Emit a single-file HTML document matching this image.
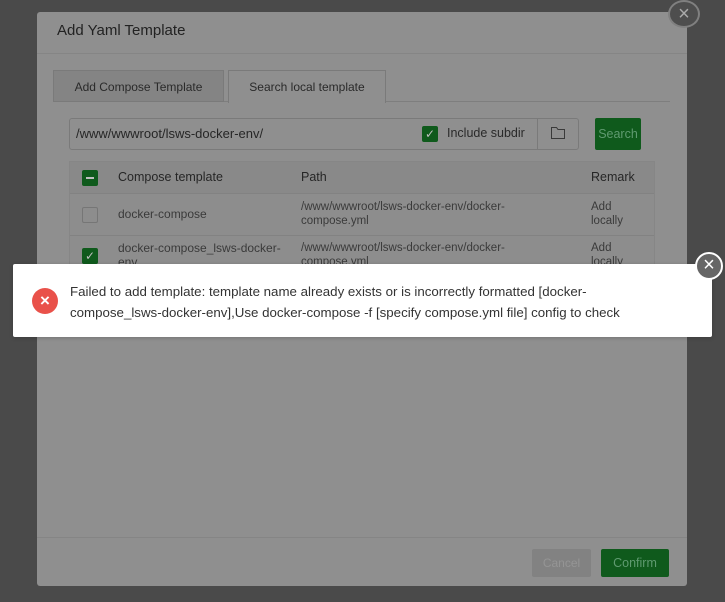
<!DOCTYPE html><html><head><style>
*{box-sizing:border-box;margin:0;padding:0}
body{width:725px;height:602px;background:#4a4a4a;font-family:"Liberation Sans",sans-serif;position:relative;overflow:hidden;color:#333}
.a{position:absolute}
.m{left:37px;top:12px;width:650px;height:574px;background:#8f8f8f;border-radius:3px}
.cb{width:16px;height:16px;border-radius:2px}
.g{background:#0f5a1c}
.chk{color:#bfbfbf;font-size:12px;line-height:16px;text-align:center}
</style></head><body>
<div class="a m"></div>
<div class="a" style="left:37px;top:53px;width:650px;height:1px;background:#858585"></div>
<div class="a" style="left:57px;top:22px;font-size:15px;color:#222">Add Yaml Template</div>
<div class="a" style="left:668px;top:0;width:32px;height:28px;border-radius:50%;background:#4e4e4e;border:2px solid #808080;color:#aaa;text-align:center;font-size:20px;line-height:24px">×</div>
<!-- tabs -->
<div class="a" style="left:53px;top:101px;width:617px;height:1px;background:#7e7e7e"></div>
<div class="a" style="left:53px;top:70px;width:171px;height:32px;background:#848484;border:1px solid #7a7a7a;font-size:12px;color:#2a2a2a;text-align:center;line-height:32px">Add Compose Template</div>
<div class="a" style="left:228px;top:70px;width:158px;height:33px;background:#8f8f8f;border:1px solid #7a7a7a;border-bottom:none;font-size:12px;color:#2a2a2a;text-align:center;line-height:32px">Search local template</div>
<!-- search row -->
<div class="a" style="left:69px;top:118px;width:510px;height:32px;border:1px solid #7a7a7a;border-radius:3px"></div>
<div class="a" style="left:537px;top:118px;width:1px;height:32px;background:#7a7a7a"></div>
<div class="a" style="left:76px;top:126px;font-size:13px;color:#262626">/www/wwwroot/lsws-docker-env/</div>
<div class="a cb g chk" style="left:422px;top:126px">✓</div>
<div class="a" style="left:447px;top:126px;font-size:12.5px;color:#2a2a2a">Include subdir</div>
<svg class="a" style="left:550px;top:126px" width="16" height="14"><path d="M1.5 1.5h5l1.5 2h6.5v9h-13z" fill="none" stroke="#3a3a3a" stroke-width="1"/></svg>
<div class="a g" style="left:595px;top:118px;width:46px;height:32px;border-radius:2px;color:#5f9a70;font-size:12.5px;text-align:center;line-height:32px">Search</div>
<!-- table -->
<div class="a" style="left:69px;top:161px;width:586px;height:110px;border:1px solid #868686;background:#8d8d8d"></div>
<div class="a" style="left:70px;top:162px;width:584px;height:32px;background:#898989;border-bottom:1px solid #828282"></div>
<div class="a" style="left:70px;top:235px;width:584px;height:1px;background:#828282"></div>
<div class="a cb g" style="left:82px;top:170px"><div style="position:absolute;left:4px;top:7px;width:8px;height:2px;background:#bfbfbf"></div></div>
<div class="a" style="left:118px;top:170px;font-size:12.5px;color:#262626">Compose template</div>
<div class="a" style="left:301px;top:170px;font-size:12.5px;color:#262626">Path</div>
<div class="a" style="left:591px;top:170px;font-size:12.5px;color:#262626">Remark</div>
<div class="a cb" style="left:82px;top:207px;border:1px solid #767676"></div>
<div class="a" style="left:118px;top:207px;font-size:12px;color:#3a3a3a">docker-compose</div>
<div class="a" style="left:301px;top:200px;font-size:11.5px;color:#3a3a3a;line-height:14px">/www/wwwroot/lsws-docker-env/docker-<br>compose.yml</div>
<div class="a" style="left:591px;top:200px;font-size:11.5px;color:#3a3a3a;line-height:14px">Add<br>locally</div>
<div class="a cb g chk" style="left:82px;top:248px">✓</div>
<div class="a" style="left:118px;top:241px;font-size:12px;color:#3a3a3a;line-height:14px">docker-compose_lsws-docker-<br>env</div>
<div class="a" style="left:301px;top:241px;font-size:11.5px;color:#3a3a3a;line-height:14px">/www/wwwroot/lsws-docker-env/docker-<br>compose.yml</div>
<div class="a" style="left:591px;top:241px;font-size:11.5px;color:#3a3a3a;line-height:14px">Add<br>locally</div>
<!-- footer -->
<div class="a" style="left:37px;top:537px;width:650px;height:1px;background:#858585"></div>
<div class="a" style="left:532px;top:549px;width:59px;height:28px;background:#828282;border-radius:2px;color:#959595;font-size:12px;text-align:center;line-height:28px">Cancel</div>
<div class="a g" style="left:601px;top:549px;width:68px;height:28px;border-radius:2px;color:#5f9a70;font-size:12.5px;text-align:center;line-height:28px">Confirm</div>
<!-- toast -->
<div class="a" style="left:13px;top:264px;width:699px;height:73px;background:#fff;border-radius:2px;box-shadow:0 1px 4px rgba(0,0,0,.2)"></div>
<div class="a" style="left:32px;top:288px;width:26px;height:26px;border-radius:50%;background:#e9514a;color:#fff;text-align:center;font-size:17px;line-height:25px;font-weight:bold">×</div>
<div class="a" style="left:70px;top:281px;font-size:13.3px;color:#333;line-height:21px;width:630px">Failed to add template: template name already exists or is incorrectly formatted [docker-<br>compose_lsws-docker-env],Use docker-compose -f [specify compose.yml file] config to check</div>
<div class="a" style="left:695px;top:252px;width:28px;height:28px;border-radius:50%;background:#666;border:2px solid #fff;color:#fff;text-align:center;font-size:20px;line-height:23px">×</div>
</body></html>
